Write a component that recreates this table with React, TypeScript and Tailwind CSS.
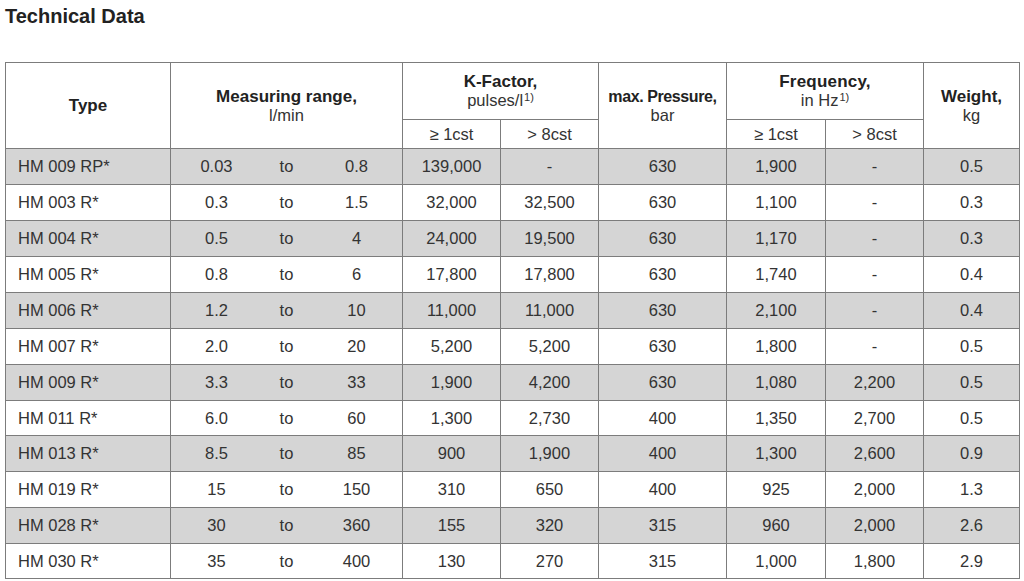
import React from "react";

const rows: string[][] = [
  ["HM 009 RP*", "0.03", "0.8", "139,000", "-", "630", "1,900", "-", "0.5"],
  ["HM 003 R*", "0.3", "1.5", "32,000", "32,500", "630", "1,100", "-", "0.3"],
  ["HM 004 R*", "0.5", "4", "24,000", "19,500", "630", "1,170", "-", "0.3"],
  ["HM 005 R*", "0.8", "6", "17,800", "17,800", "630", "1,740", "-", "0.4"],
  ["HM 006 R*", "1.2", "10", "11,000", "11,000", "630", "2,100", "-", "0.4"],
  ["HM 007 R*", "2.0", "20", "5,200", "5,200", "630", "1,800", "-", "0.5"],
  ["HM 009 R*", "3.3", "33", "1,900", "4,200", "630", "1,080", "2,200", "0.5"],
  ["HM 011 R*", "6.0", "60", "1,300", "2,730", "400", "1,350", "2,700", "0.5"],
  ["HM 013 R*", "8.5", "85", "900", "1,900", "400", "1,300", "2,600", "0.9"],
  ["HM 019 R*", "15", "150", "310", "650", "400", "925", "2,000", "1.3"],
  ["HM 028 R*", "30", "360", "155", "320", "315", "960", "2,000", "2.6"],
  ["HM 030 R*", "35", "400", "130", "270", "315", "1,000", "1,800", "2.9"],
];

const rowHeights = [36, 36, 36, 36, 36, 36, 36, 35, 36, 36, 36, 35];

const cell = "border border-[#7c7c7c] text-center align-middle p-0";

function Sup({ children }: { children: React.ReactNode }) {
  return (
    <span className="relative -top-[5px] inline-block text-[11px] leading-[11px] ml-[1px]">{children}</span>
  );
}

export default function App() {
  return (
    <div className="w-[1024px] h-[581px] overflow-hidden bg-white font-['Liberation_Sans',Arial,sans-serif] text-[#333333]">
      <div className="h-[62px] pt-[4px] pl-[5px]">
        <h1 className="text-[20px] leading-[24px] font-bold text-[#222222]">Technical Data</h1>
      </div>
      <table className="ml-[5px] w-[1014px] table-fixed border-collapse text-[16.5px] leading-[19px]">
        <colgroup>
          <col className="w-[165px]" />
          <col className="w-[232px]" />
          <col className="w-[98px]" />
          <col className="w-[98px]" />
          <col className="w-[128px]" />
          <col className="w-[99px]" />
          <col className="w-[98px]" />
          <col className="w-[96px]" />
        </colgroup>
        <thead>
          <tr className="h-[57px]">
            <th rowSpan={2} className={cell + " font-bold text-[17px] text-[#222222]"}>
              Type
            </th>
            <th rowSpan={2} className={cell + " font-normal"}>
              <div className="font-bold text-[17px] text-[#222222]">Measuring range,</div>
              <div>l/min</div>
            </th>
            <th colSpan={2} className={cell + " font-normal"}>
              <div className="font-bold text-[17px] text-[#222222]">K-Factor,</div>
              <div>
                pulses/l<Sup>1)</Sup>
              </div>
            </th>
            <th rowSpan={2} className={cell + " font-normal"}>
              <div className="font-bold text-[16px] tracking-[-0.4px] text-[#222222]">max. Pressure,</div>
              <div>bar</div>
            </th>
            <th colSpan={2} className={cell + " font-normal"}>
              <div className="font-bold text-[17px] tracking-[0.2px] text-[#222222]">Frequency,</div>
              <div>
                in Hz<Sup>1)</Sup>
              </div>
            </th>
            <th rowSpan={2} className={cell + " font-normal"}>
              <div className="font-bold text-[17px] text-[#222222]">Weight,</div>
              <div>kg</div>
            </th>
          </tr>
          <tr className="h-[29px]">
            <th className={cell + " font-normal"}>≥ 1cst</th>
            <th className={cell + " font-normal"}>&gt; 8cst</th>
            <th className={cell + " font-normal"}>≥ 1cst</th>
            <th className={cell + " font-normal"}>&gt; 8cst</th>
          </tr>
        </thead>
        <tbody>
          {rows.map((r, i) => (
            <tr
              key={r[0]}
              className={i % 2 === 0 ? "bg-[#d5d5d5]" : "bg-white"}
              style={{ height: rowHeights[i] }}
            >
              <td className="border border-[#7c7c7c] align-middle text-left pl-[12px]">{r[0]}</td>
              <td className={cell}>
                <div className="flex justify-center">
                  <span className="w-[70px] text-center">{r[1]}</span>
                  <span className="w-[70px] text-center">to</span>
                  <span className="w-[70px] text-center">{r[2]}</span>
                </div>
              </td>
              <td className={cell}>{r[3]}</td>
              <td className={cell}>{r[4]}</td>
              <td className={cell}>{r[5]}</td>
              <td className={cell}>{r[6]}</td>
              <td className={cell}>{r[7]}</td>
              <td className={cell}>{r[8]}</td>
            </tr>
          ))}
        </tbody>
      </table>
    </div>
  );
}
